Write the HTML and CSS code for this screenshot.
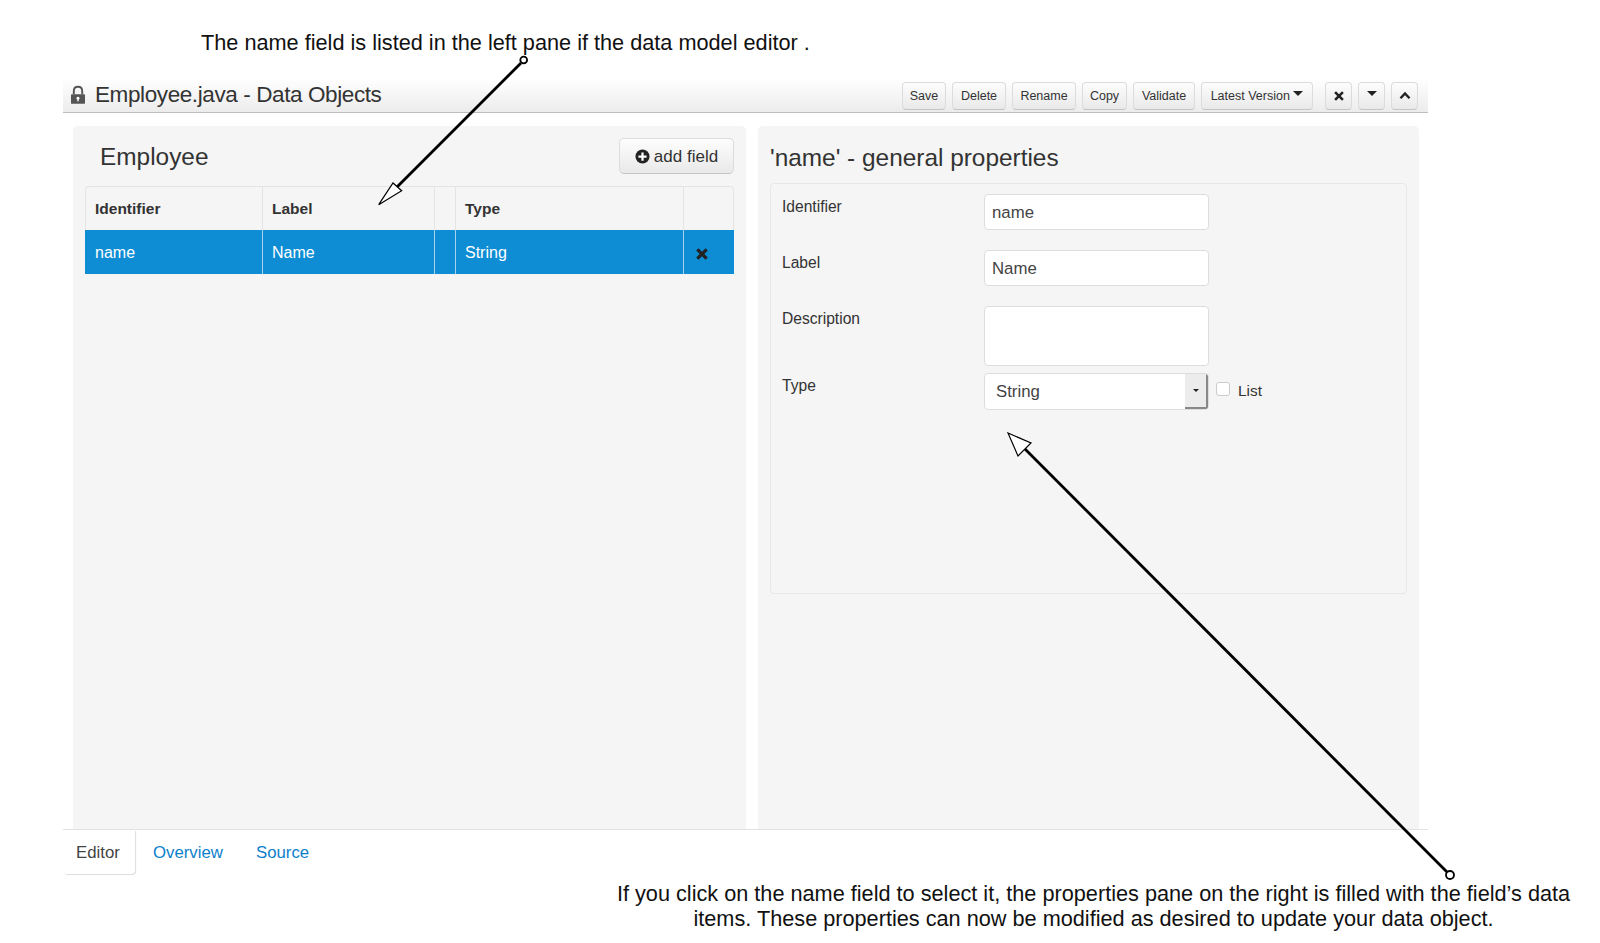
FILE: index.html
```html
<!DOCTYPE html>
<html lang="en">
<head>
<meta charset="utf-8">
<title>Employee.java - Data Objects</title>
<link rel="stylesheet" href="styles.css">
</head>
<body>
<div class="page">
  <p class="note note-top">The name field is listed in the left pane if the data model editor .</p>
  <header class="titlebar">
    <svg class="lock" viewBox="0 0 16 22" aria-hidden="true"><path d="M3.2 10V6.6C3.2 3.6 5.2 1.6 8 1.6s4.8 2 4.8 5V10" fill="none" stroke="#555" stroke-width="2.2"/><path d="M1 10h14a1 1 0 0 1 1 1v9a1 1 0 0 1-1 1H1a1 1 0 0 1-1-1v-9a1 1 0 0 1 1-1z" fill="#555"/><circle cx="8" cy="14.6" r="1.7" fill="#fff"/><rect x="7.2" y="15" width="1.6" height="3.2" fill="#fff"/></svg>
    <h1 class="title">Employee.java - Data Objects</h1>
    <div class="actions">
      <button class="btn w-save">Save</button>
      <button class="btn w-delete">Delete</button>
      <button class="btn w-rename">Rename</button>
      <button class="btn w-copy">Copy</button>
      <button class="btn w-validate">Validate</button>
      <button class="btn w-latest">Latest Version <span class="caret"></span></button>
      <div class="win-actions">
        <button class="btn btn-icon"><svg class="ico" viewBox="0 0 12 12" aria-hidden="true"><path d="M3 1.2 6 4.2 9 1.2 10.8 3 7.8 6 10.8 9 9 10.8 6 7.8 3 10.8 1.2 9 4.2 6 1.2 3z" fill="#222"/></svg></button>
        <button class="btn btn-icon btn-caret"><span class="caret"></span></button>
        <button class="btn btn-icon"><svg class="ico" viewBox="0 0 12 12" aria-hidden="true"><path d="M1.5 8.2 6 3.4l4.5 4.8" fill="none" stroke="#222" stroke-width="2.4"/></svg></button>
      </div>
    </div>
  </header>
  <main class="panes">
    <section class="pane pane-left">
      <div class="pane-head">
        <h2 class="entity">Employee</h2>
        <button class="btn btn-add"><svg class="plus" viewBox="0 0 16 16" aria-hidden="true"><circle cx="8" cy="8" r="7.5" fill="#222"/><path d="M6.8 3.6h2.4v3.2h3.2v2.4H9.2v3.2H6.8V9.2H3.6V6.8h3.2z" fill="#fff"/></svg>add field</button>
      </div>
      <table class="fields">
        <thead>
          <tr><th class="c1">Identifier</th><th class="c2">Label</th><th class="c3"></th><th class="c4">Type</th><th class="c5"></th></tr>
        </thead>
        <tbody>
          <tr class="selected"><td>name</td><td>Name</td><td></td><td>String</td><td class="del"><svg class="ico-del" viewBox="0 0 12 12" aria-hidden="true"><path d="M3 1 6 4 9 1 11 3 8 6 11 9 9 11 6 8 3 11 1 9 4 6 1 3z" fill="#222"/></svg></td></tr>
        </tbody>
      </table>
    </section>
    <section class="pane pane-right">
      <h2 class="props-title">'name' - general properties</h2>
      <div class="props">
        <div class="row row-input"><label class="lbl">Identifier</label><input class="input" value="name"></div>
        <div class="row row-input"><label class="lbl">Label</label><input class="input" value="Name"></div>
        <div class="row row-text"><label class="lbl">Description</label><textarea class="input area"></textarea></div>
        <div class="row row-type">
          <label class="lbl">Type</label>
          <div class="select"><span class="select-text">String</span><span class="select-btn"><span class="mini-caret"></span></span></div>
          <span class="check"></span><span class="check-label">List</span>
        </div>
      </div>
    </section>
  </main>
  <nav class="tabs">
    <a class="tab active">Editor</a>
    <a class="tab">Overview</a>
    <a class="tab">Source</a>
  </nav>
  <div class="note note-bottom">If you click on the name field to select it, the properties pane on the right is filled with the field’s data<br>items. These properties can now be modified as desired to update your data object.</div>
  <svg class="arrows" viewBox="0 0 1600 943" aria-hidden="true">
    <line x1="521" y1="63" x2="397" y2="187" stroke="#000" stroke-width="2.8"/>
    <circle cx="523.7" cy="60" r="3.4" fill="#fff" stroke="#000" stroke-width="1.8"/>
    <path d="M378.7 204.7 393 183 401.7 190.7z" fill="#fff" stroke="#000" stroke-width="1.2"/>
    <line x1="1447" y1="872" x2="1024" y2="448" stroke="#000" stroke-width="2.8"/>
    <circle cx="1450" cy="875" r="4" fill="#fff" stroke="#000" stroke-width="1.8"/>
    <path d="M1008 433 1031 443 1018 456z" fill="#fff" stroke="#000" stroke-width="1.2"/>
  </svg>
</div>
</body>
</html>
```
FILE: styles.css
```css
* { box-sizing: border-box; }
html, body { margin: 0; background: #fff; }
.page {
  position: relative;
  width: 1600px;
  height: 943px;
  padding: 78px 0 0 63px;
  overflow: hidden;
  font-family: "Liberation Sans", Arial, sans-serif;
  color: #333;
}
.note { margin: 0; position: absolute; color: #111; font-size: 21.7px; line-height: 25px; }
.note-top { left: 201px; top: 30px; white-space: nowrap; }
.note-bottom { left: 600px; top: 881px; width: 987px; text-align: center; white-space: nowrap; }
.arrows { position: absolute; left: 0; top: 0; width: 1600px; height: 943px; pointer-events: none; }

.titlebar {
  width: 1365px;
  height: 35px;
  display: flex;
  align-items: center;
  background: linear-gradient(#fff, #ececec);
  border-bottom: 1px solid #bdbdbd;
  padding-left: 8px;
}
.lock { width: 14px; height: 20px; margin-right: 10px; flex: none; }
.title { margin: 0; font-size: 22.5px; letter-spacing: -0.4px; font-weight: 400; color: #333; line-height: 30px; white-space: nowrap; }
.actions { margin-left: auto; display: flex; align-items: center; gap: 6px; padding: 2px 10px 0 0; }
.win-actions { display: flex; gap: 6px; margin-left: 6px; }
.btn {
  height: 28px;
  padding: 0;
  font: 12.5px "Liberation Sans", Arial, sans-serif;
  color: #333;
  background: linear-gradient(#fdfdfd, #e9e9e9);
  border: 1px solid #dcdcdc;
  border-bottom-color: #c4c4c4;
  border-radius: 4px;
  white-space: nowrap;
}
.w-save { width: 44px; }
.w-delete { width: 54px; }
.w-rename { width: 64px; }
.w-copy { width: 45px; }
.w-validate { width: 62px; }
.w-latest { width: 112px; }
.btn-icon { width: 27px; display: flex; align-items: center; justify-content: center; }
.btn-caret { align-items: flex-start; padding-top: 8px; }
.caret { display: inline-block; width: 0; height: 0; border: 5px solid transparent; border-top-color: #222; border-bottom: 0; vertical-align: 4px; }
.ico { width: 12px; height: 12px; }

.panes { display: flex; gap: 12px; margin: 13px 0 0 10px; height: 703px; }
.pane { background: #f5f5f5; border-radius: 5px 5px 0 0; }
.pane-left { width: 673px; padding: 12px 12px 0 12px; }
.pane-right { width: 661px; padding: 0 12px 0 12px; }
.pane-head { display: flex; justify-content: space-between; align-items: center; height: 35px; margin-bottom: 13px; padding-left: 15px; }
.entity { margin: 2px 0 0; font-size: 24.4px; font-weight: 400; color: #333; }
.btn-add {
  width: 115px;
  height: 36px;
  padding-top: 2px;
  font-size: 17px;
  border-radius: 5px;
  display: flex;
  align-items: center;
  justify-content: center;
}
.plus { width: 15px; height: 15px; margin-right: 4px; }

.fields { width: 649px; border-collapse: separate; border-spacing: 0; table-layout: fixed; font-size: 16px; }
.fields th, .fields td { height: 44px; padding: 0 9px; text-align: left; border-right: 1px solid #e4e4e4; }
.fields td { padding-top: 2px; }
.fields td:first-child { padding-left: 10px; }
.fields th { border-top: 1px solid #e4e4e4; font-size: 15.5px; font-weight: 700; color: #333; }
.fields th:first-child { border-left: 1px solid #e4e4e4; border-top-left-radius: 4px; }
.fields th:last-child { border-top-right-radius: 4px; }
.c1 { width: 178px; }
.c2 { width: 172px; }
.c3 { width: 21px; }
.c4 { width: 228px; }
.c5 { width: 50px; }
.selected td { background: #0e8dd4; color: #fff; border-right-color: #a9d3ec; }
.selected td:last-child { border-right-color: #0e8dd4; }
.del { text-align: center; }
.ico-del { width: 14px; height: 14px; display: block; margin: 2px 0 0 2px; }

.props-title { margin: 0; height: 57px; padding-top: 16px; font-size: 24.4px; line-height: 32px; font-weight: 400; color: #333; }
.props { width: 637px; height: 411px; border: 1px solid #e8e8e8; border-radius: 4px; padding: 10px 0 0 11px; }
.row { display: flex; align-items: flex-start; }
.lbl { width: 202px; flex: none; font-size: 15.6px; line-height: 18px; padding-top: 4px; color: #333; }
.row-input { height: 56px; }
.row-text { height: 67px; }
.input {
  width: 225px;
  height: 36px;
  background: #fff;
  border: 1px solid #ddd;
  border-radius: 4px;
  padding: 1px 7px 0;
  font: 16.8px "Liberation Sans", Arial, sans-serif;
  color: #444;
  resize: none;
  outline: 0;
  display: block;
}
.area { height: 60px; }
.select {
  width: 225px;
  height: 37px;
  display: flex;
  background: #fff;
  border: 1px solid #ddd;
  border-radius: 4px;
  overflow: hidden;
}
.select-text { flex: 1; padding-left: 11px; font-size: 16.8px; line-height: 36px; color: #444; }
.select-btn {
  width: 23px;
  display: flex;
  align-items: center;
  justify-content: center;
  background: #ececec;
  border-right: 2px solid #888;
  border-bottom: 2px solid #888;
}
.mini-caret { width: 0; height: 0; border: 3.5px solid transparent; border-top-color: #222; border-bottom: 0; }
.check { width: 14px; height: 14px; margin: 9px 8px 0 7px; background: #fff; border: 1px solid #ccc; border-radius: 3px; flex: none; }
.check-label { font-size: 15.4px; line-height: 18px; padding-top: 9px; }

.tabs { width: 1365px; height: 44px; display: flex; border-top: 1px solid #e2e2e2; }
.tab { display: block; font-size: 16.8px; line-height: 46px; padding: 0 15px 0 18px; color: #0c7fcb; }
.tab.active { width: 72px; height: 44px; padding-left: 13px; color: #444; background: #fff; border-radius: 0 0 4px 4px; box-shadow: 1px 1px 1px #ddd; }
```
